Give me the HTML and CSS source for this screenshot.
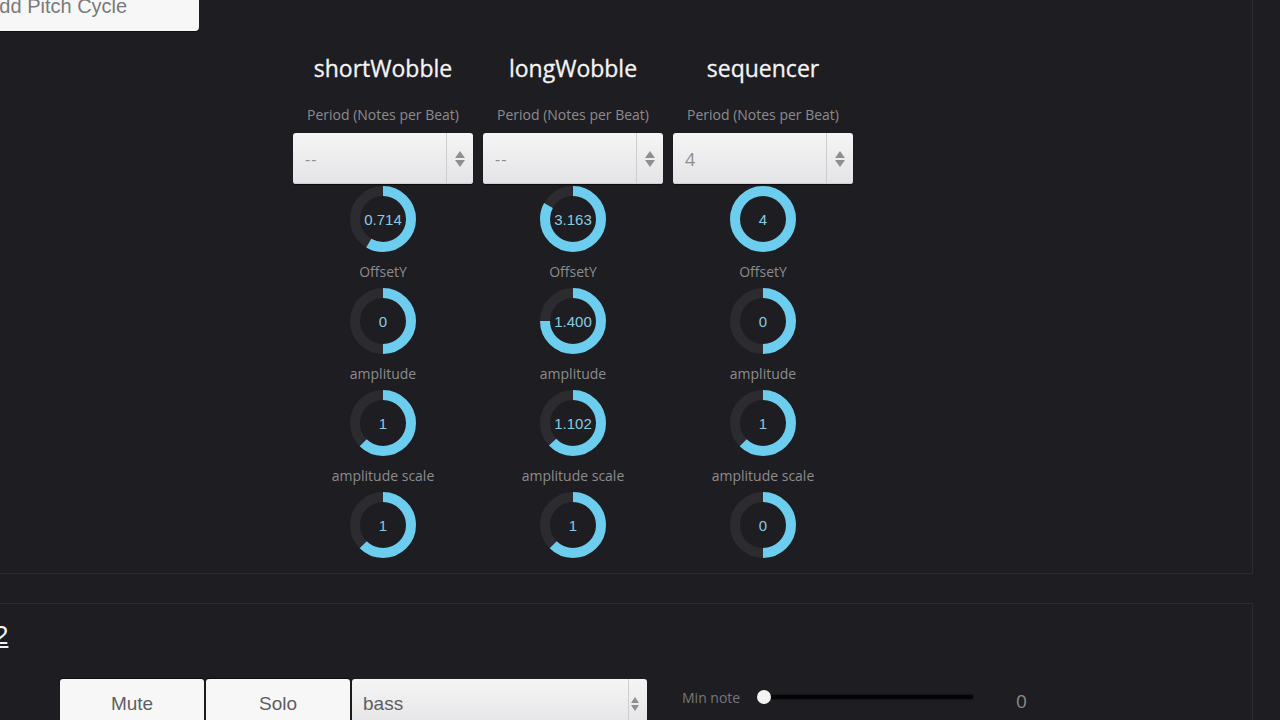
FILE: index.html
```html
<!DOCTYPE html>
<html>
<head>
<meta charset="utf-8">
<link rel="stylesheet" href="styles.css">
</head>
<body>
<div class="page">
  <div class="panel">
    <div class="top-btn"><span>Add Pitch Cycle</span></div>
    <div class="columns">
      <div class="col">
        <div class="title">shortWobble</div>
        <div class="label period">Period (Notes per Beat)</div>
        <div class="select"><span class="val dash">--</span><span class="arrows"><i class="up"></i><i class="down"></i></span></div>
        <div class="knob"><svg viewBox="0 0 66 66"><circle class="track" cx="33" cy="33" r="28"/><circle class="fill" cx="33" cy="33" r="28" pathLength="100" style="stroke-dasharray: 58.5 100"/></svg><span>0.714</span></div>
        <div class="label">OffsetY</div>
        <div class="knob"><svg viewBox="0 0 66 66"><circle class="track" cx="33" cy="33" r="28"/><circle class="fill" cx="33" cy="33" r="28" pathLength="100" style="stroke-dasharray: 50 100"/></svg><span>0</span></div>
        <div class="label">amplitude</div>
        <div class="knob"><svg viewBox="0 0 66 66"><circle class="track" cx="33" cy="33" r="28"/><circle class="fill" cx="33" cy="33" r="28" pathLength="100" style="stroke-dasharray: 62.5 100"/></svg><span>1</span></div>
        <div class="label">amplitude scale</div>
        <div class="knob"><svg viewBox="0 0 66 66"><circle class="track" cx="33" cy="33" r="28"/><circle class="fill" cx="33" cy="33" r="28" pathLength="100" style="stroke-dasharray: 62.5 100"/></svg><span>1</span></div>
      </div>
      <div class="col">
        <div class="title">longWobble</div>
        <div class="label period">Period (Notes per Beat)</div>
        <div class="select"><span class="val dash">--</span><span class="arrows"><i class="up"></i><i class="down"></i></span></div>
        <div class="knob"><svg viewBox="0 0 66 66"><circle class="track" cx="33" cy="33" r="28"/><circle class="fill" cx="33" cy="33" r="28" pathLength="100" style="stroke-dasharray: 83 100"/></svg><span>3.163</span></div>
        <div class="label">OffsetY</div>
        <div class="knob"><svg viewBox="0 0 66 66"><circle class="track" cx="33" cy="33" r="28"/><circle class="fill" cx="33" cy="33" r="28" pathLength="100" style="stroke-dasharray: 75 100"/></svg><span>1.400</span></div>
        <div class="label">amplitude</div>
        <div class="knob"><svg viewBox="0 0 66 66"><circle class="track" cx="33" cy="33" r="28"/><circle class="fill" cx="33" cy="33" r="28" pathLength="100" style="stroke-dasharray: 63 100"/></svg><span>1.102</span></div>
        <div class="label">amplitude scale</div>
        <div class="knob"><svg viewBox="0 0 66 66"><circle class="track" cx="33" cy="33" r="28"/><circle class="fill" cx="33" cy="33" r="28" pathLength="100" style="stroke-dasharray: 62.5 100"/></svg><span>1</span></div>
      </div>
      <div class="col">
        <div class="title">sequencer</div>
        <div class="label period">Period (Notes per Beat)</div>
        <div class="select"><span class="val">4</span><span class="arrows"><i class="up"></i><i class="down"></i></span></div>
        <div class="knob"><svg viewBox="0 0 66 66"><circle class="track" cx="33" cy="33" r="28"/><circle class="fill" cx="33" cy="33" r="28" pathLength="100" style="stroke-dasharray: 100 100"/></svg><span>4</span></div>
        <div class="label">OffsetY</div>
        <div class="knob"><svg viewBox="0 0 66 66"><circle class="track" cx="33" cy="33" r="28"/><circle class="fill" cx="33" cy="33" r="28" pathLength="100" style="stroke-dasharray: 50 100"/></svg><span>0</span></div>
        <div class="label">amplitude</div>
        <div class="knob"><svg viewBox="0 0 66 66"><circle class="track" cx="33" cy="33" r="28"/><circle class="fill" cx="33" cy="33" r="28" pathLength="100" style="stroke-dasharray: 62.5 100"/></svg><span>1</span></div>
        <div class="label">amplitude scale</div>
        <div class="knob"><svg viewBox="0 0 66 66"><circle class="track" cx="33" cy="33" r="28"/><circle class="fill" cx="33" cy="33" r="28" pathLength="100" style="stroke-dasharray: 50 100"/></svg><span>0</span></div>
      </div>
    </div>
  </div>

  <div class="panel2">
    <div class="num">2</div>
    <div class="controls">
      <div class="btn">Mute</div>
      <div class="btn">Solo</div>
      <div class="select wide"><span class="val">bass</span><span class="arrows small"><i class="up"></i><i class="down"></i></span></div>
      <div class="slider-group">
        <span class="min-label">Min note</span>
        <div class="slider"><div class="thumb"></div></div>
        <span class="slider-val">0</span>
      </div>
    </div>
  </div>
</div>
</body>
</html>
```

FILE: styles.css
```css
html, body {
  margin: 0;
  padding: 0;
  background: #1e1d22;
  overflow: hidden;
}
.page {
  width: 1280px;
  height: 720px;
  overflow: hidden;
  font-family: "Open Sans", "Noto Sans", sans-serif;
}
.top-btn {
  width: 199px;
  height: 31px;
  background: #f7f7f8;
  border-bottom-right-radius: 4px;
  box-shadow: 0 1px 1px rgba(0,0,0,0.5);
  overflow: hidden;
  font-family: "Liberation Sans", Arial, sans-serif;
  font-size: 20px;
  color: #7a7a7a;
  line-height: 22px;
  margin-bottom: 23px;
}
.top-btn span {
  display: block;
  margin-top: -5px;
  margin-left: -14px;
  white-space: nowrap;
}
.panel {
  width: 1253px;
  box-sizing: border-box;
  border-right: 1px solid #2b2b30;
  border-bottom: 1px solid #2b2b30;
  padding-bottom: 15px;
}
.columns {
  display: flex;
  gap: 10px;
  margin-left: 293px;
}
.col {
  width: 180px;
  display: flex;
  flex-direction: column;
  align-items: center;
}
.title {
  color: #f4f4f4;
  font-size: 23px;
  line-height: 30px;
  height: 30px;
  margin-top: -1px;
  margin-bottom: 22px;
  -webkit-text-stroke: 0.3px #f4f4f4;
}
.label {
  color: #8c8c8f;
  font-size: 14px;
  line-height: 20px;
  height: 20px;
  margin-top: 10px;
  margin-bottom: 6px;
  white-space: nowrap;
}
.label.period {
  margin-top: 0;
  margin-bottom: 8px;
}
.select {
  width: 180px;
  height: 51px;
  box-sizing: border-box;
  border-radius: 3px;
  background: linear-gradient(#f5f5f6, #e4e4e6);
  box-shadow: inset 0 -1px 0 #cfcfd2, 0 1px 1px rgba(0,0,0,0.6);
  display: flex;
  align-items: center;
  position: relative;
  margin-bottom: 2px;
}
.select .val {
  flex: 1;
  padding-left: 12px;
  color: #8d8d8d;
  font-size: 18px;
  font-family: "Open Sans", sans-serif;
}
.select .val.dash {
  font-size: 16px;
  letter-spacing: 1px;
}
.arrows {
  width: 26px;
  height: 100%;
  border-left: 1px solid #cdcdd0;
  display: flex;
  flex-direction: column;
  align-items: center;
  justify-content: center;
  gap: 2px;
}
.arrows i {
  display: block;
  width: 0;
  height: 0;
  border-left: 5px solid transparent;
  border-right: 5px solid transparent;
}
.arrows .up { border-bottom: 7px solid #8f8f92; }
.arrows .down { border-top: 7px solid #8f8f92; }
.arrows.small { width: 19px; padding-right: 6px; box-sizing: border-box; }
.arrows.small i { border-left-width: 4px; border-right-width: 4px; }
.arrows.small .up { border-bottom-width: 6px; }
.arrows.small .down { border-top-width: 6px; }
.knob {
  width: 66px;
  height: 66px;
  position: relative;
}
.knob svg {
  width: 66px;
  height: 66px;
  display: block;
  transform: rotate(-90deg);
}
.knob .track {
  fill: none;
  stroke: #2b2b30;
  stroke-width: 10;
}
.knob .fill {
  fill: none;
  stroke: #6ccdee;
  stroke-width: 10;
}
.knob span {
  position: absolute;
  inset: 0;
  display: flex;
  align-items: center;
  justify-content: center;
  color: #88cbe2;
  font-family: "Liberation Sans", Arial, sans-serif;
  font-size: 15px;
}
.panel2 {
  width: 1253px;
  height: 200px;
  box-sizing: border-box;
  margin-top: 29px;
  border-top: 1px solid #2b2b30;
  border-right: 1px solid #2b2b30;
  padding-top: 16px;
}
.num {
  color: #f2f2f2;
  font-family: "Liberation Sans", Arial, sans-serif;
  font-size: 26px;
  line-height: 30px;
  margin-left: -6px;
  text-decoration: underline;
  text-underline-offset: 2px;
}
.controls {
  margin-top: 29px;
  margin-left: 60px;
  display: flex;
  align-items: flex-start;
}
.btn {
  width: 144px;
  height: 50px;
  background: #f7f7f8;
  border-radius: 3px 3px 0 0;
  margin-right: 2px;
  display: flex;
  align-items: center;
  justify-content: center;
  color: #5e5e60;
  font-family: "Liberation Sans", Arial, sans-serif;
  font-size: 19px;
  box-shadow: 0 -1px 1px rgba(0,0,0,0.6);
}
.select.wide {
  width: 295px;
  height: 50px;
  border-radius: 3px 3px 0 0;
}
.select.wide .val {
  color: #5e5e60;
  font-family: "Liberation Sans", Arial, sans-serif;
  font-size: 19px;
  padding-left: 11px;
}
.slider-group {
  display: flex;
  align-items: center;
  margin-left: 35px;
  margin-top: 1px;
}
.min-label {
  color: #77777a;
  font-size: 14px;
  width: 82px;
}
.slider {
  width: 209px;
  height: 4px;
  background: #050506;
  border-radius: 2px;
  box-shadow: 0 0 2px #000;
  position: relative;
}
.thumb {
  position: absolute;
  left: -7px;
  top: -5px;
  width: 14px;
  height: 14px;
  border-radius: 50%;
  background: #f3f3f3;
}
.slider-val {
  color: #8a8a8c;
  font-size: 19px;
  margin-left: 43px;
  margin-top: 8px;
}
```
